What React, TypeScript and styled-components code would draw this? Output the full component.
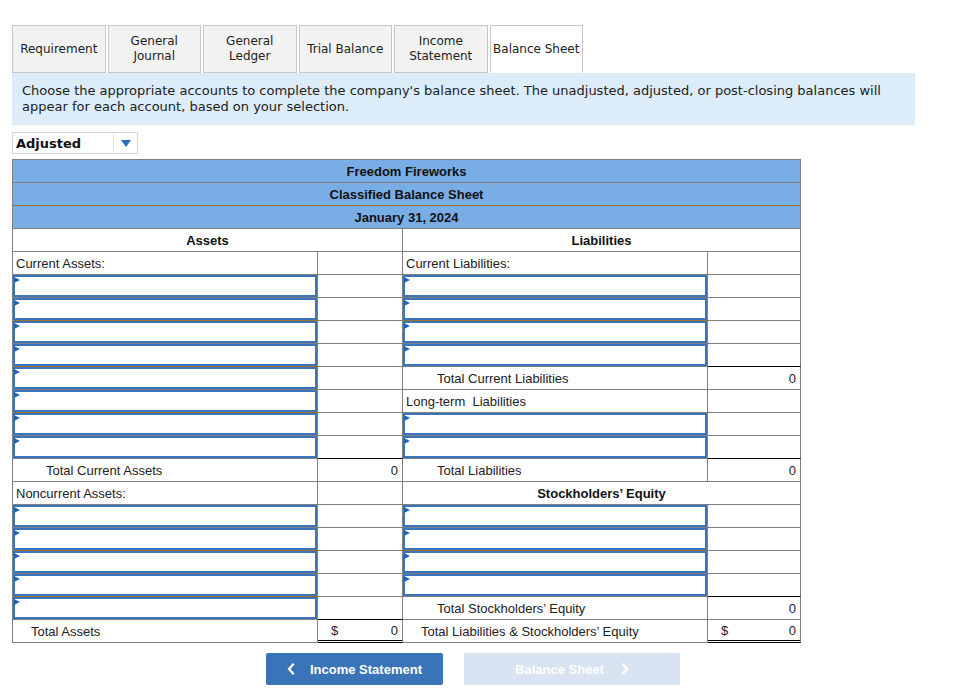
import React from 'react';
import styled, { createGlobalStyle } from 'styled-components';

const GRAY = '#7f7f7f';
const GOLD = '#9a7420';
const HEAD_BG = '#79ade5';
const INPUT_BLUE = '#3a74bb';

const Global = createGlobalStyle`
  html, body { margin: 0; padding: 0; background: #fff; }
  body { font-family: "Liberation Sans", Arial, sans-serif; color: #222; }
`;

const Page = styled.div`
  padding: 25px 0 20px 12px;
`;

const TabBar = styled.div`
  display: flex;
  gap: 2px;
`;

const Tab = styled.div<{ $active?: boolean }>`
  width: 93.5px;
  height: 48px;
  box-sizing: border-box;
  border: 1px solid #c6c6c6;
  border-bottom-color: ${p => (p.$active ? '#fff' : '#c6c6c6')};
  background: ${p => (p.$active ? '#fff' : '#f2f2f2')};
  display: flex;
  align-items: center;
  justify-content: center;
  text-align: center;
  font-family: "DejaVu Sans", Verdana, sans-serif;
  font-size: 12px;
  line-height: 15px;
  color: #222;
`;

const Instructions = styled.div`
  width: 903px;
  box-sizing: border-box;
  background: #dcecf9;
  padding: 10px 0 10px 10px;
  font-family: "DejaVu Sans", Verdana, sans-serif;
  font-size: 13px;
  line-height: 16px;
  color: #222;
`;

const Dropdown = styled.div`
  margin-top: 7px;
  width: 126px;
  height: 22px;
  box-sizing: border-box;
  border: 1px solid #d6d6d6;
  display: flex;
  align-items: stretch;
`;

const DropdownValue = styled.div`
  flex: 1;
  display: flex;
  align-items: center;
  padding-left: 3px;
  font-family: "DejaVu Sans", Verdana, sans-serif;
  font-weight: bold;
  font-size: 13px;
  color: #111;
`;

const DropdownArrow = styled.div`
  width: 23px;
  border-left: 1px solid #e2e2e2;
  display: flex;
  align-items: center;
  justify-content: center;
`;

const Sheet = styled.div`
  margin-top: 5px;
  width: 789px;
  box-sizing: border-box;
  display: grid;
  grid-template-columns: 305px 85px 305px 93px;
  border-left: 1px solid ${GRAY};
  border-top: 1px solid ${GRAY};
`;

type Bottom = 'gray' | 'gold' | 'black' | 'double';

const Cell = styled.div<{
  $span?: number;
  $bottom?: Bottom;
  $align?: 'left' | 'center' | 'right' | 'split';
  $indent?: number;
  $bold?: boolean;
  $head?: boolean;
}>`
  grid-column: span ${p => p.$span ?? 1};
  height: 23px;
  box-sizing: border-box;
  border-right: 1px solid ${GRAY};
  border-bottom: ${p =>
    p.$bottom === 'double'
      ? '3px double #000'
      : `1px solid ${p.$bottom === 'gold' ? GOLD : p.$bottom === 'black' ? '#000' : GRAY}`};
  background: ${p => (p.$head ? HEAD_BG : '#fff')};
  display: flex;
  align-items: center;
  justify-content: ${p =>
    p.$align === 'center'
      ? 'center'
      : p.$align === 'right'
      ? 'flex-end'
      : p.$align === 'split'
      ? 'space-between'
      : 'flex-start'};
  padding: ${p =>
    p.$align === 'split'
      ? '0 4px 0 13px'
      : p.$align === 'right'
      ? '0 4px 0 0'
      : p.$align === 'center'
      ? '0'
      : `0 4px 0 ${3 + (p.$indent ?? 0)}px`};
  font-size: 13px;
  font-weight: ${p => (p.$bold ? 'bold' : 'normal')};
  color: ${p => (p.$bold ? '#111' : '#222')};
  white-space: pre;
`;

const InputCell = styled.div<{ $bottom?: Bottom }>`
  height: 23px;
  box-sizing: border-box;
  border-right: 1px solid ${GRAY};
  border-bottom: 1px solid ${p => (p.$bottom === 'gold' ? GOLD : GRAY)};
  display: flex;
`;

const AccountPicker = styled.div`
  flex: 1;
  box-sizing: border-box;
  border: 2px solid ${INPUT_BLUE};
  background: #fff;
  position: relative;
  &::before {
    content: '';
    position: absolute;
    left: -1px;
    top: 0;
    width: 0;
    height: 0;
    border-left: 6px solid #1d64bf;
    border-top: 3.5px solid transparent;
    border-bottom: 3.5px solid transparent;
  }
`;

const NavRow = styled.div`
  display: flex;
  gap: 21px;
  margin: 10px 0 0 254px;
`;

const NavButton = styled.button<{ $off?: boolean; $w: number; $gap: number }>`
  width: ${p => p.$w}px;
  height: 32px;
  border: none;
  border-radius: 2px;
  padding: 0;
  background: ${p => (p.$off ? '#d8e4f2' : '#3a74b8')};
  color: #fff;
  font-family: "Liberation Sans", Arial, sans-serif;
  font-weight: bold;
  font-size: 13px;
  display: flex;
  align-items: center;
  justify-content: center;
  gap: ${p => p.$gap}px;
  cursor: ${p => (p.$off ? 'default' : 'pointer')};
`;

type Spec =
  | { k: 'label'; t: string; indent?: number; bottom?: Bottom }
  | { k: 'section'; t: string; span: number }
  | { k: 'input'; bottom?: Bottom }
  | { k: 'amt'; t?: string; dollar?: boolean; bottom?: Bottom };

const L = (t: string, indent = 0): Spec => ({ k: 'label', t, indent });
const I = (bottom?: Bottom): Spec => ({ k: 'input', bottom });
const A = (t?: string, bottom?: Bottom, dollar?: boolean): Spec => ({ k: 'amt', t, bottom, dollar });
const S = (t: string, span = 2): Spec => ({ k: 'section', t, span });

const rows: Spec[][] = [
  [S('Assets'), S('Liabilities')],
  [L('Current Assets:'), A(), L('Current Liabilities:'), A()],
  [I(), A(), I(), A()],
  [I('gold'), A(), I('gold'), A()],
  [I(), A(), I(), A()],
  [I('gold'), A(), I(), A(undefined, 'black')],
  [I(), A(), L('Total Current Liabilities', 31), A('0')],
  [I('gold'), A(), L('Long-term  Liabilities'), A()],
  [I(), A(), I(), A()],
  [I(), A(undefined, 'black'), I(), A(undefined, 'black')],
  [L('Total Current Assets', 30), A('0'), L('Total Liabilities', 31), A('0')],
  [L('Noncurrent Assets:'), A(), S('Stockholders\u2019 Equity')],
  [I(), A(), I(), A()],
  [I('gold'), A(), I('gold'), A()],
  [I(), A(), I(), A()],
  [I('gold'), A(), I(), A(undefined, 'black')],
  [I(), A(undefined, 'black'), L('Total Stockholders\u2019 Equity', 31), A('0')],
  [
    L('Total Assets', 15),
    A('0', 'double', true),
    L('Total Liabilities & Stockholders\u2019 Equity', 15),
    A('0', 'double', true),
  ],
];

function renderCell(c: Spec, key: number) {
  switch (c.k) {
    case 'label':
      return (
        <Cell key={key} $indent={c.indent} $bottom={c.bottom}>
          {c.t}
        </Cell>
      );
    case 'section':
      return (
        <Cell key={key} $span={c.span} $align="center" $bold>
          {c.t}
        </Cell>
      );
    case 'input':
      return (
        <InputCell key={key} $bottom={c.bottom}>
          <AccountPicker />
        </InputCell>
      );
    case 'amt':
      return (
        <Cell key={key} $align={c.dollar ? 'split' : 'right'} $bottom={c.bottom}>
          {c.dollar && <span>$</span>}
          {c.t && <span>{c.t}</span>}
        </Cell>
      );
  }
}

const tabs = [
  ['Requirement'],
  ['General', 'Journal'],
  ['General', 'Ledger'],
  ['Trial Balance'],
  ['Income', 'Statement'],
  ['Balance Sheet'],
];

const Chevron = ({ dir }: { dir: 'left' | 'right' }) => (
  <svg width="8" height="12" viewBox="0 0 8 12">
    <polyline
      points={dir === 'left' ? '6,1.5 2,6 6,10.5' : '2,1.5 6,6 2,10.5'}
      fill="none"
      stroke="#fff"
      strokeWidth="2.2"
      strokeLinecap="square"
    />
  </svg>
);

export default function App() {
  return (
    <>
      <Global />
      <Page>
        <TabBar>
          {tabs.map((t, i) => (
            <Tab key={i} $active={i === tabs.length - 1}>
              <div>
                {t.map((line, j) => (
                  <div key={j}>{line}</div>
                ))}
              </div>
            </Tab>
          ))}
        </TabBar>
        <Instructions>
          Choose the appropriate accounts to complete the company's balance sheet. The unadjusted,
          adjusted, or post-closing balances will appear for each account, based on your selection.
        </Instructions>
        <Dropdown>
          <DropdownValue>Adjusted</DropdownValue>
          <DropdownArrow>
            <svg width="10" height="7" viewBox="0 0 10 7">
              <polygon points="0,0 10,0 5,7" fill="#2a6cc0" />
            </svg>
          </DropdownArrow>
        </Dropdown>
        <Sheet>
          <Cell $span={4} $head $align="center" $bold>
            Freedom Fireworks
          </Cell>
          <Cell $span={4} $head $align="center" $bold $bottom="gold">
            Classified Balance Sheet
          </Cell>
          <Cell $span={4} $head $align="center" $bold>
            January 31, 2024
          </Cell>
          {rows.map((r, ri) => (
            <React.Fragment key={ri}>{r.map((c, ci) => renderCell(c, ci))}</React.Fragment>
          ))}
        </Sheet>
        <NavRow>
          <NavButton $w={177} $gap={15}>
            <Chevron dir="left" />
            Income Statement
          </NavButton>
          <NavButton $w={216} $gap={17} $off disabled>
            Balance Sheet
            <Chevron dir="right" />
          </NavButton>
        </NavRow>
      </Page>
    </>
  );
}
